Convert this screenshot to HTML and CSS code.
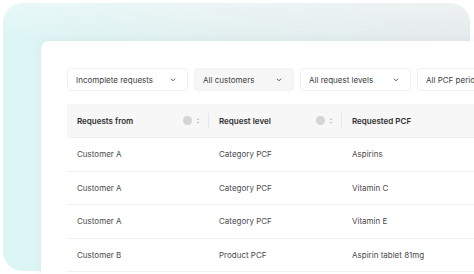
FILE: index.html
```html
<!DOCTYPE html>
<html>
<head>
<meta charset="utf-8">
<link rel="stylesheet" href="styles.css">
</head>
<body>
<div class="frame">
  <div class="card">
    <div class="filters">
      <div class="select w1"><span>Incomplete requests</span><svg class="chev" viewBox="0 0 6 4"><path d="M1.2 1 L3 2.8 L4.8 1" fill="none" stroke="#555" stroke-width="1" stroke-linecap="round" stroke-linejoin="round"/></svg></div>
      <div class="select w2 active"><span>All customers</span><svg class="chev" viewBox="0 0 6 4"><path d="M1.2 1 L3 2.8 L4.8 1" fill="none" stroke="#555" stroke-width="1" stroke-linecap="round" stroke-linejoin="round"/></svg></div>
      <div class="select w3"><span>All request levels</span><svg class="chev" viewBox="0 0 6 4"><path d="M1.2 1 L3 2.8 L4.8 1" fill="none" stroke="#555" stroke-width="1" stroke-linecap="round" stroke-linejoin="round"/></svg></div>
      <div class="select w4"><span>All PCF periods</span><svg class="chev" viewBox="0 0 6 4"><path d="M1.2 1 L3 2.8 L4.8 1" fill="none" stroke="#555" stroke-width="1" stroke-linecap="round" stroke-linejoin="round"/></svg></div>
    </div>
    <div class="table">
      <div class="row head">
        <div class="cell c1"><span class="label">Requests from</span><span class="tools"><span class="info"></span><svg class="sort" viewBox="0 0 4 8"><path d="M0.5 3 L2 1.2 L3.5 3 Z M0.5 5 L2 6.8 L3.5 5 Z" fill="#c4c4c4"/></svg></span><span class="div"></span></div>
        <div class="cell c2"><span class="label">Request level</span><span class="tools"><span class="info"></span><svg class="sort" viewBox="0 0 4 8"><path d="M0.5 3 L2 1.2 L3.5 3 Z M0.5 5 L2 6.8 L3.5 5 Z" fill="#c4c4c4"/></svg></span><span class="div"></span></div>
        <div class="cell c3"><span class="label">Requested PCF</span></div>
      </div>
      <div class="row"><div class="cell c1">Customer A</div><div class="cell c2">Category PCF</div><div class="cell c3">Aspirins</div></div>
      <div class="row"><div class="cell c1">Customer A</div><div class="cell c2">Category PCF</div><div class="cell c3">Vitamin C</div></div>
      <div class="row"><div class="cell c1">Customer A</div><div class="cell c2">Category PCF</div><div class="cell c3">Vitamin E</div></div>
      <div class="row"><div class="cell c1">Customer B</div><div class="cell c2">Product PCF</div><div class="cell c3">Aspirin tablet 81mg</div></div>
    </div>
  </div>
</div>
</body>
</html>
```
FILE: styles.css
```css
html, body {
  margin: 0;
  padding: 0;
  background: #ffffff;
  width: 474px;
  height: 274px;
  overflow: hidden;
  font-family: Inter, "Noto Sans", sans-serif;
}
.frame {
  margin: 3px 0 0 3px;
  width: 467px;
  height: 268px;
  border-radius: 20px;
  background:
    linear-gradient(180deg, rgba(255, 255, 255, 0.35) 0%, rgba(255, 255, 255, 0) 14%),
    linear-gradient(90deg, #dcf5f5 0%, #e1f0f0 40%, #e5eaec 100%);
  box-sizing: border-box;
  padding: 38px 0 0 38px;
}
.card {
  width: 520px;
  height: 260px;
  background: #ffffff;
  border-radius: 8px 0 0 0;
  box-sizing: border-box;
  padding: 27px 0 0 26px;
  box-shadow: 0 0 6px rgba(120, 140, 150, 0.1);
}
.filters {
  display: flex;
  gap: 6px;
  height: 23px;
}
.select {
  box-sizing: border-box;
  height: 23px;
  border: 1px solid #f0f0f0;
  border-radius: 4px;
  background: #ffffff;
  display: flex;
  align-items: center;
  justify-content: space-between;
  padding: 0 11px 0 8px;
  font-size: 8px;
  color: #3d3d3d;
  flex: none;
  white-space: nowrap;
}
.select.active { background: #f6f6f7; border-color: #f3f3f3; }
.w1 { width: 121px; }
.w2 { width: 100px; }
.w3 { width: 111px; }
.w4 { width: 110px; }
.chev { width: 6px; height: 4px; flex: none; }
.table {
  margin-top: 13px;
  width: 460px;
}
.row {
  display: flex;
  height: 33.5px;
  border-bottom: 1px solid #f2f2f2;
  box-sizing: border-box;
  align-items: center;
  font-size: 8px;
  color: #4a4a4a;
}
.row.head {
  height: 34px;
  background: #f7f7f8;
  font-weight: 600;
  color: #2f2f2f;
  border-bottom: 1px solid #f0f0f0;
}
.cell {
  display: flex;
  align-items: center;
  height: 100%;
  box-sizing: border-box;
  padding-left: 10px;
}
.c1 { width: 142px; }
.c2 { width: 133px; }
.c3 { flex: 1; }
.label { flex: 1; }
.tools {
  display: flex;
  align-items: center;
  gap: 4px;
  margin-right: 8px;
}
.info {
  width: 9px;
  height: 9px;
  border-radius: 50%;
  background: #d4d4d4;
}
.sort { width: 4px; height: 8px; }
.div {
  width: 1px;
  height: 15px;
  background: #e8e8e8;
}
```
